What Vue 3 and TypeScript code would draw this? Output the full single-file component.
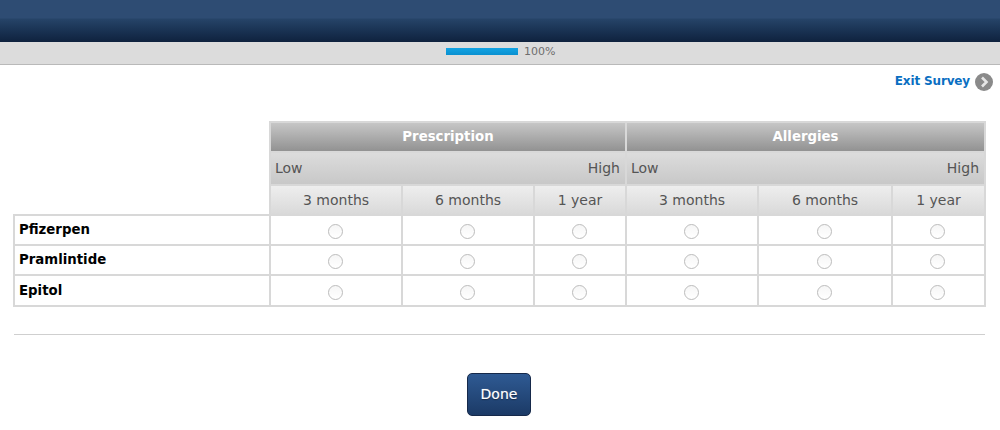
<script setup lang="ts">
const drugs: string[] = ['Pfizerpen', 'Pramlintide', 'Epitol']
const groups: string[] = ['Prescription', 'Allergies']
const periods: string[] = ['3 months', '6 months', '1 year']
const cells: number[] = [0, 1, 2, 3, 4, 5]
</script>

<template>
  <div class="page">
    <header class="top"></header>
    <div class="progress">
      <div class="bar"></div>
      <span class="pct">100%</span>
    </div>
    <div class="exit">
      <a class="exit-link">Exit Survey</a>
      <svg class="exit-icon" width="18" height="18" viewBox="0 0 18 18">
        <circle cx="9" cy="9" r="9" fill="#8a8a8a" />
        <path d="M7 4.5 L11.5 9 L7 13.5" fill="none" stroke="#e6e6e6" stroke-width="2.6" />
      </svg>
    </div>
    <table class="grid">
      <colgroup>
        <col class="c0" />
        <col class="c1" /><col class="c2" /><col class="c3" />
        <col class="c4" /><col class="c5" /><col class="c6" />
      </colgroup>
      <thead>
        <tr class="r-group">
          <th class="blank" rowspan="3"></th>
          <th v-for="g in groups" :key="g" colspan="3" class="group">{{ g }}</th>
        </tr>
        <tr class="r-scale">
          <th v-for="g in groups" :key="g" colspan="3" class="scale">
            <div class="scale-row"><span>Low</span><span>High</span></div>
          </th>
        </tr>
        <tr class="r-period">
          <template v-for="g in groups" :key="g">
            <th v-for="p in periods" :key="p" class="period">{{ p }}</th>
          </template>
        </tr>
      </thead>
      <tbody>
        <tr v-for="d in drugs" :key="d" class="r-body">
          <th class="drug">{{ d }}</th>
          <td v-for="c in cells" :key="c" class="cell"><span class="radio"></span></td>
        </tr>
      </tbody>
    </table>
    <hr class="rule" />
    <div class="actions">
      <button class="done" type="button">Done</button>
    </div>
  </div>
</template>

<style>
body { background: #fff; }
</style>

<style scoped>
.page {
  width: 1000px;
  height: 430px;
  overflow: hidden;
  background: #fff;
  font-family: "DejaVu Sans", sans-serif;
  font-size: 14px;
}
.top {
  height: 42px;
  background: linear-gradient(to bottom, #2e4c73 0, #2e4c73 18px, #264468 19px, #1a3354 30px, #0f223e 42px);
}
.progress {
  height: 22px;
  display: flex;
  align-items: center;
  padding-left: 446px;
  gap: 6px;
  background: #dcdcdc;
  border-bottom: 1px solid #b9b9b9;
}
.bar {
  width: 72px;
  height: 7px;
  margin-top: -3px;
  background: linear-gradient(to bottom, #12a4e4, #0a90d0);
}
.pct {
  font-size: 11px;
  color: #6e6e6e;
  margin-top: -4px;
}
.exit {
  display: flex;
  justify-content: flex-end;
  align-items: center;
  gap: 5px;
  height: 18px;
  margin-top: 8px;
  padding-right: 7px;
}
.exit-link {
  font-size: 12px;
  font-weight: 700;
  letter-spacing: -0.15px;
  color: #0a6fc2;
  margin-top: -2px;
}
.exit-icon { display: block; }
.grid {
  margin: 30px 0 0 13px;
  width: 971px;
  table-layout: fixed;
  border-collapse: collapse;
}
.c0 { width: 256px; }
.c1 { width: 132px; }
.c2 { width: 132px; }
.c3 { width: 92px; }
.c4 { width: 132px; }
.c5 { width: 134px; }
.c6 { width: 93px; }
.grid th, .grid td {
  padding: 0;
  border: 2px solid #d8d8d8;
  box-sizing: border-box;
}
.grid .blank {
  border: 0;
  border-right: 2px solid #d8d8d8;
  background: #fff;
}
.r-group { height: 30px; }
.r-scale { height: 33px; }
.r-period { height: 30px; }
.r-body { height: 30px; }
.r-body:last-child { height: 31px; }
.group {
  background: linear-gradient(to bottom, #c6c6c6, #929292);
  color: #fff;
  font-size: 13.3px;
  font-weight: 700;
  text-align: center;
  vertical-align: top;
  line-height: 27px;
}
.scale {
  background: linear-gradient(to bottom, #dcdcdc, #c8c8c8);
  font-weight: 400;
  color: #555;
}
.scale-row {
  display: flex;
  justify-content: space-between;
  padding: 0 5px 2px 4px;
}
.period {
  background: linear-gradient(to bottom, #eeeeee, #d9d9d9);
  font-weight: 400;
  color: #555;
  text-align: center;
}
.drug {
  background: #fff;
  color: #000;
  font-size: 13.3px;
  font-weight: 700;
  text-align: left;
  padding: 0 0 2px 4px !important;
}
.r-body:last-child .drug { padding-bottom: 0 !important; }
.cell {
  background: #fff;
  text-align: center;
  vertical-align: middle;
  padding: 0 2px 0 0 !important;
}
.radio {
  display: block;
  width: 15px;
  height: 15px;
  margin: 2px auto 0;
  box-sizing: border-box;
  border: 1px solid #bcbcbc;
  border-radius: 50%;
  background: linear-gradient(to bottom, #f6f6f6, #fff);
}
.r-body:last-child .radio { margin-top: 3px; }
.rule {
  margin: 27px 15px 0 14px;
  border: 0;
  border-top: 1px solid #cfcfcf;
  height: 0;
}
.actions {
  display: flex;
  justify-content: center;
  margin-top: 38px;
  padding-right: 2px;
}
.done {
  width: 64px;
  height: 43px;
  padding: 0 0 2px;
  border: 1px solid #16294a;
  border-radius: 5px;
  background: linear-gradient(to bottom, #2f5a93, #1b3a66);
  color: #fff;
  font-family: inherit;
  font-size: 14px;
  text-shadow: 0 0 1px rgba(255, 255, 255, 0.5), 0 1px 1px #10213c;
}
</style>
